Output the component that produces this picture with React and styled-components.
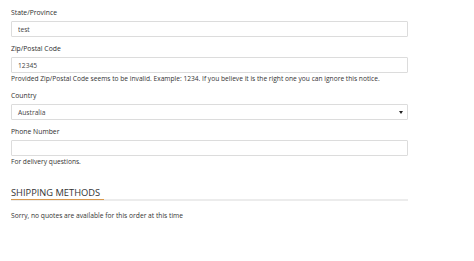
import React from 'react';
import styled, { createGlobalStyle } from 'styled-components';

const GlobalStyle = createGlobalStyle`
	html, body {
		margin: 0;
		padding: 0;
		background: #fff;
	}
	body {
		font-family: 'Open Sans', 'Liberation Sans', sans-serif;
		color: #333;
	}
`;

const fields = [
	{ id: 'region', label: 'State/Province', value: 'test' },
	{
		id: 'postcode',
		label: 'Zip/Postal Code',
		value: '12345',
		note: 'Provided Zip/Postal Code seems to be invalid. Example: 1234. If you believe it is the right one you can ignore this notice.',
	},
	{ id: 'country', label: 'Country', value: 'Australia', select: true },
	{ id: 'telephone', label: 'Phone Number', value: '', note: 'For delivery questions.' },
];

function App() {
	return (
		<>
			<GlobalStyle />
			<Checkout>
				{fields.map(field => (
					<Field key={field.id}>
						<Label htmlFor={field.id}>{field.label}</Label>
						{field.select ? (
							<SelectBox id={field.id}>
								<span>{field.value}</span>
								<Arrow />
							</SelectBox>
						) : (
							<Input id={field.id} defaultValue={field.value} />
						)}
						{field.note && <Note>{field.note}</Note>}
					</Field>
				))}
				<Section>
					<StepTitle>
						<span>Shipping Methods</span>
					</StepTitle>
					<Message>Sorry, no quotes are available for this order at this time</Message>
				</Section>
			</Checkout>
		</>
	);
}

export default App;

const Checkout = styled.div`
	width: 397px;
	margin-left: 11px;
	padding-top: 8px;
`;

const Field = styled.div`
	margin-bottom: 7px;
`;

const Label = styled.label`
	display: block;
	font-size: 6.8px;
	line-height: 10px;
	font-weight: 500;
	color: #2e2e2e;
	margin-bottom: 3px;
`;

const Input = styled.input`
	display: block;
	box-sizing: border-box;
	width: 100%;
	height: 16px;
	margin: 0;
	padding: 0 6px;
	border: 1px solid #dcdcdc;
	border-radius: 1px;
	font-family: 'Open Sans', 'Liberation Sans', sans-serif;
	font-size: 6.7px;
	color: #444;
	outline: none;
`;

const SelectBox = styled.div`
	box-sizing: border-box;
	height: 16px;
	padding: 0 4px 0 6px;
	border: 1px solid #dcdcdc;
	border-radius: 1px;
	display: flex;
	align-items: center;
	justify-content: space-between;
	font-size: 6.7px;
	color: #444;
`;

const Arrow = styled.span`
	width: 0;
	height: 0;
	border-left: 2px solid transparent;
	border-right: 2px solid transparent;
	border-top: 3px solid #222;
`;

const Note = styled.div`
	font-size: 6.65px;
	line-height: 10px;
	margin-top: 1px;
	color: #333;
`;

const Section = styled.div`
	margin-top: 19px;
`;

const StepTitle = styled.div`
	border-bottom: 2px solid #ececec;
	font-size: 9.3px;
	line-height: 13px;
	font-weight: 400;
	color: #333;
	text-transform: uppercase;

	span {
		display: inline-block;
		padding-right: 4px;
		border-bottom: 1px solid #d99a4e;
		margin-bottom: -1px;
	}
`;

const Message = styled.div`
	margin-top: 10px;
	font-size: 6.7px;
	line-height: 10px;
	color: #333;
`;
